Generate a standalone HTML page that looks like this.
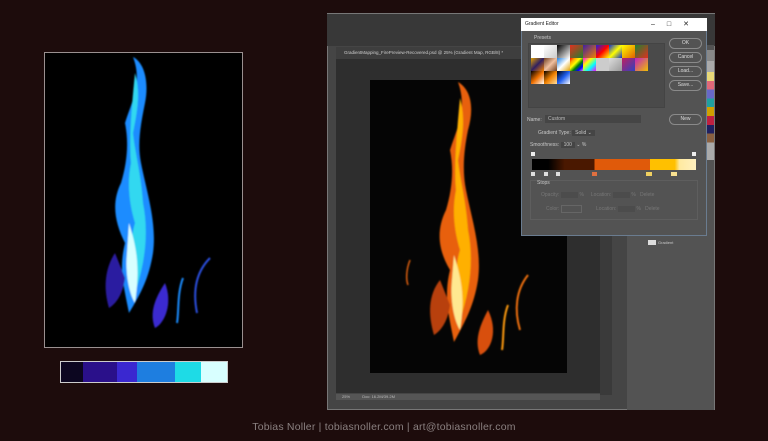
<!DOCTYPE html>
<html><head><style>
*{margin:0;padding:0;box-sizing:border-box}
body{width:768px;height:441px;background:#1d0c0c;position:relative;overflow:hidden;font-family:"Liberation Sans",sans-serif}
.a{position:absolute}
.t{font-size:5px;color:#c8c8c8}
.btn{position:absolute;left:669px;width:33px;height:11px;border:1px solid #8a8a8a;border-radius:6px;font-size:5px;color:#ddd;text-align:center;line-height:9px}
.g div{width:13px;height:13px}
</style></head><body>
<!-- left blue -->
<div class="a" style="left:44px;top:52px;width:199px;height:296px;background:#000;border:1px solid #9a9090">
<svg width="197" height="294" viewBox="0 0 197 294">
<defs><filter id="b"><feGaussianBlur stdDeviation="0.8"/></filter></defs>
<g filter="url(#b)">
<path d="M88 4 C100 10 104 30 100 50 C96 70 92 90 96 110 C102 140 112 170 108 200 C104 225 96 240 84 260 C78 230 74 215 80 190 C70 170 66 150 76 130 C82 110 84 90 80 70 C86 50 98 30 88 4Z" fill="#1a8cff"/>
<path d="M90 20 C96 40 92 60 88 80 C90 100 96 120 98 150 C104 180 100 210 90 240 C86 210 84 190 90 170 C84 150 82 130 86 110 C84 90 86 60 90 20Z" fill="#30d8f0"/>
<path d="M84 170 C90 190 96 210 90 250 C84 240 80 220 82 200Z" fill="#d8ffff"/>
<path d="M70 200 C60 215 58 235 64 255 C72 250 78 240 80 225Z" fill="#2c1aa0"/>
<path d="M120 230 C128 250 120 270 110 275 C104 260 110 245 120 230Z" fill="#3a2ad0"/>
<path d="M138 225 C132 240 134 260 132 270" stroke="#1a8cff" stroke-width="2" fill="none"/>
<path d="M165 205 C150 220 148 240 152 260" stroke="#2c50e0" stroke-width="2" fill="none"/>
</g></svg></div>
<div class="a" style="left:60px;top:361px;width:168px;height:22px;border:1px solid #ccc;display:flex">
<div style="width:22px;background:#0c0620"></div><div style="width:34px;background:#2a108a"></div><div style="width:20px;background:#3a28d0"></div><div style="width:38px;background:#1e7ee0"></div><div style="width:26px;background:#1edbe6"></div><div style="flex:1;background:#d8ffff"></div></div>
<!-- photoshop -->
<div class="a" style="left:327px;top:13px;width:388px;height:397px;background:#454545;border:1px solid #777"></div>
<div class="a" style="left:327px;top:14px;width:388px;height:32px;background:#383838"></div>
<div class="a" style="left:336px;top:47px;width:264px;height:12px;background:#3e3e3e;font-size:4.5px;color:#ccc;line-height:12px;padding-left:8px">GradientMapping_FirePreview-Recovered.psd @ 25% (Gradient Map, RGB/8) *</div>
<div class="a" style="left:336px;top:59px;width:264px;height:334px;background:#2e2e2e"></div>
<div class="a" style="left:600px;top:45px;width:12px;height:350px;background:#3a3a3a"></div>
<div class="a" style="left:627px;top:45px;width:87px;height:365px;background:#535353"></div>
<div class="a" style="left:336px;top:394px;width:264px;height:6px;background:#555;font-size:4px;color:#bbb;line-height:6px;padding-left:6px">25%&nbsp;&nbsp;&nbsp;&nbsp;&nbsp;&nbsp;&nbsp;&nbsp;&nbsp;&nbsp;&nbsp;Doc: 16.2M/39.2M</div>
<div class="a" style="left:370px;top:80px;width:197px;height:293px;background:#050505">
<svg width="197" height="293" viewBox="0 0 197 293">
<g filter="url(#b)">
<path d="M88 2 C102 10 104 30 98 50 C94 70 92 90 96 110 C102 140 112 170 108 200 C104 225 96 240 84 262 C78 232 74 215 80 190 C68 170 66 150 76 130 C82 110 84 90 80 70 C86 50 98 30 88 2Z" fill="#e8600e"/>
<path d="M90 18 C96 40 92 60 88 80 C90 100 96 120 98 150 C104 180 100 210 90 240 C86 210 84 190 90 170 C84 150 82 130 86 110 C84 90 86 60 90 18Z" fill="#ffb000"/>
<path d="M84 175 C90 195 96 215 90 250 C84 240 80 220 82 200Z" fill="#ffe890"/>
<path d="M70 200 C58 215 58 235 64 255 C72 250 78 240 80 225Z" fill="#b8400a"/>
<path d="M118 230 C128 250 122 270 110 275 C104 260 110 245 118 230Z" fill="#d85010"/>
<path d="M138 225 C132 240 134 260 132 270" stroke="#ff9a10" stroke-width="2" fill="none"/>
<path d="M158 195 C146 210 144 230 150 250" stroke="#f07010" stroke-width="2" fill="none"/>
<path d="M40 180 C36 190 36 200 38 205" stroke="#e06010" stroke-width="1.5" fill="none"/>
</g></svg></div>
<!-- layer rows -->
<div class="a" style="left:640px;top:228px;width:14px;height:8px;background:#000"></div>
<div class="a" style="left:648px;top:240px;width:8px;height:5px;background:#ddd"></div>
<div class="a t" style="left:658px;top:240px;font-size:4px">Gradient</div>
<div class="a" style="left:705px;top:50px;width:9px;height:110px;background:linear-gradient(#888 0 10%,#aaa 10% 20%,#e8d878 20% 28%,#e06878 28% 36%,#6868c8 36% 44%,#20a0a0 44% 52%,#d0a000 52% 60%,#c02040 60% 68%,#202060 68% 76%,#8a6040 76% 84%,#aaa 84%)"></div>
<!-- dialog -->
<div class="a" style="left:521px;top:18px;width:186px;height:218px;background:#535353;border:1px solid #6a7c90"></div>
<div class="a" style="left:521px;top:18px;width:186px;height:13px;background:#fff;font-size:5px;line-height:13px;padding-left:4px;color:#222">Gradient Editor<span style="position:absolute;right:6px;letter-spacing:12px;font-size:7px">–□✕</span></div>
<div class="a t" style="left:534px;top:35px">Presets</div>
<div class="a" style="left:528px;top:43px;width:137px;height:65px;background:#4a4a4a;border:1px solid #444"></div>
<div class="a g" style="left:531px;top:45px;width:117px;height:39px;display:flex;flex-wrap:wrap">
<div style="background:#fff"></div><div style="background:linear-gradient(135deg,#fff,#ccc)"></div><div style="background:linear-gradient(135deg,#000,#fff)"></div><div style="background:linear-gradient(135deg,#e03020,#208030)"></div><div style="background:linear-gradient(135deg,#4020a0,#f08000)"></div><div style="background:linear-gradient(135deg,#2020e0,#f00,#ff0)"></div><div style="background:linear-gradient(135deg,#1030d0,#ff0,#1030d0)"></div><div style="background:linear-gradient(135deg,#ff0,#e06000)"></div><div style="background:linear-gradient(135deg,#208030,#e03020)"></div>
<div style="background:linear-gradient(135deg,#e0a000,#302060,#f08000)"></div><div style="background:linear-gradient(135deg,#704020,#f0c0a0,#704020)"></div><div style="background:linear-gradient(135deg,#2080e0,#fff,#e0a000)"></div><div style="background:linear-gradient(135deg,red,orange,yellow,green,blue,violet)"></div><div style="background:linear-gradient(135deg,#f0f,#ff0,#0ff,#f0f)"></div><div style="background:#ccc"></div><div style="background:linear-gradient(135deg,#ddd,#999)"></div><div style="background:linear-gradient(135deg,#c02060,#3040c0)"></div><div style="background:linear-gradient(135deg,#c020c0,#f0c000)"></div>
<div style="background:linear-gradient(135deg,#000,#f07000,#fff)"></div><div style="background:linear-gradient(135deg,#000,#f08000,#ffe0a0)"></div><div style="background:linear-gradient(135deg,#000,#2060f0,#fff)"></div>
</div>
<div class="btn" style="top:38px">OK</div><div class="btn" style="top:52px">Cancel</div><div class="btn" style="top:66px">Load...</div><div class="btn" style="top:80px">Save...</div><div class="btn" style="top:114px">New</div>
<div class="a t" style="left:527px;top:117px">Name:</div>
<div class="a" style="left:545px;top:115px;width:96px;height:8px;background:#454545;font-size:5px;color:#bbb;padding-left:3px;line-height:8px">Custom</div>
<div class="a t" style="left:538px;top:130px">Gradient Type: <span style="background:#454545;padding:0 3px">Solid ⌄</span></div>
<div class="a t" style="left:530px;top:142px">Smoothness: <span style="background:#454545;padding:0 3px">100</span> ⌄ %</div>
<div class="a" style="left:532px;top:159px;width:164px;height:11px;background:linear-gradient(90deg,#000 0%,#000 10%,#4a1800 20%,#4a1800 38%,#e05a0a 38%,#e05a0a 72%,#ffc000 72%,#ffc000 87%,#ffeaa0 90%,#fff0c0)"></div>
<div class="a" style="left:531px;top:152px;width:4px;height:4px;background:#eee"></div><div class="a" style="left:692px;top:152px;width:4px;height:4px;background:#eee"></div>
<div class="a" style="left:531px;top:172px;width:4px;height:4px;background:#ddd"></div><div class="a" style="left:544px;top:172px;width:4px;height:4px;background:#ddd"></div><div class="a" style="left:556px;top:172px;width:4px;height:4px;background:#ddd"></div><div class="a" style="left:592px;top:172px;width:5px;height:4px;background:#e07040"></div><div class="a" style="left:646px;top:172px;width:6px;height:4px;background:#f0d060"></div><div class="a" style="left:671px;top:172px;width:6px;height:4px;background:#f8e090"></div>
<div class="a" style="left:530px;top:180px;width:168px;height:40px;border:1px solid #5e5e5e"></div>
<div class="a t" style="left:537px;top:180px">Stops</div>
<div class="a t" style="left:541px;top:192px;color:#777">Opacity: <span style="background:#4c4c4c;padding:0 8px">&nbsp;</span> % &nbsp;&nbsp;&nbsp;&nbsp;Location: <span style="background:#4c4c4c;padding:0 8px">&nbsp;</span> % &nbsp;&nbsp;Delete</div>
<div class="a t" style="left:546px;top:206px;color:#777">Color: <span style="border:1px solid #666;padding:0 9px">&nbsp;</span> &nbsp;&nbsp;&nbsp;&nbsp;&nbsp;&nbsp;&nbsp;&nbsp;&nbsp;Location: <span style="background:#4c4c4c;padding:0 8px">&nbsp;</span> % &nbsp;&nbsp;Delete</div>
<div class="a" style="left:0;top:421px;width:768px;text-align:center;font-size:10.5px;color:#8a8080;letter-spacing:0.2px">Tobias Noller | tobiasnoller.com | art@tobiasnoller.com</div>
</body></html>
